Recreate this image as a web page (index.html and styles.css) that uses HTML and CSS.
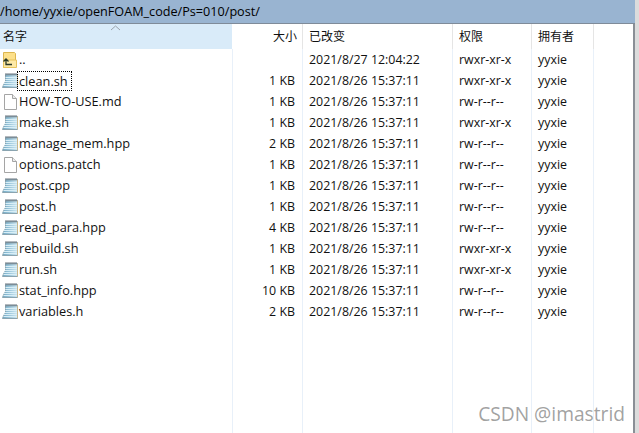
FILE: index.html
```html
<!DOCTYPE html>
<html lang="zh">
<head>
<meta charset="utf-8">
<title>post</title>
<link rel="stylesheet" href="styles.css">
</head>
<body>
<svg class="defs" width="0" height="0" aria-hidden="true">
  <defs>
    <linearGradient id="sheet" x1="0" y1="0" x2="1" y2="0">
      <stop offset="0" stop-color="#6fa9c6"/>
      <stop offset="1" stop-color="#cfe8f2"/>
    </linearGradient>
  </defs>
  <symbol id="script" viewBox="0 0 16 16">
    <path d="M3.500 1.500H15.500V14.500H.5L1.500 12 3.500 8.500Z" fill="url(#sheet)" stroke="#8aa4b0"/>
    <path d="M3.500 4.500H15M3.300 6.500H15M2.800 8.500H15M2 10.500H15M1.500 12.500H15" stroke="#d9eef6" stroke-width="1"/>
    <path d="M4 0V2.500M6 0V2.500M8 0V2.500M10 0V2.500M12 0V2.500M14 0V2.500" stroke="#6a7780" stroke-width="1"/>
    <path d="M15.500 1.500V14.500" stroke="#c7b58c"/>
  </symbol>
  <symbol id="blank" viewBox="0 0 16 16">
    <path d="M2.500 .5H10.500L14.500 4.500V15.500H2.500Z" fill="#fff" stroke="#a5a5a5"/>
    <path d="M10.500 .5V4.500H14.500" fill="#ececec" stroke="#a5a5a5"/>
  </symbol>
  <symbol id="up" viewBox="0 0 16 16">
    <path d="M1.500 .5H12.500L13.500 1.500V15.500H1.500Z" fill="#fde08a" stroke="#dcb650"/>
    <path d="M1.500 8H14.500V15.500H1.500Z" fill="#fde9a6" stroke="#e6c35d"/>
    <path d="M1.500 9.500 4 7 6.500 9.500M4 7.500V12.500H10" fill="none" stroke="#2b3a2a" stroke-width="1.300"/>
  </symbol>
</svg>
<div class="window">
  <div class="path">/home/yyxie/openFOAM_code/Ps=010/post/</div>
  <main class="list">
    <div class="row head">
      <div class="c name selected">名字<svg class="sort" width="11" height="6" viewBox="0 0 11 6"><path d="M1 5 5.500 1 10 5" fill="none" stroke="#9aa3ac"/></svg></div>
      <div class="c size">大小</div>
      <div class="c date">已改变</div>
      <div class="c perm">权限</div>
      <div class="c owner">拥有者</div>
      <div class="c rest"></div>
    </div>
    <div class="row"><div class="c name"><svg class="ico"><use href="#up"/></svg><span>..</span></div><div class="c size"></div><div class="c date">2021/8/27 12:04:22</div><div class="c perm">rwxr-xr-x</div><div class="c owner">yyxie</div><div class="c rest"></div></div>
    <div class="row"><div class="c name"><svg class="ico"><use href="#script"/></svg><span class="focus">clean.sh</span></div><div class="c size">1 KB</div><div class="c date">2021/8/26 15:37:11</div><div class="c perm">rwxr-xr-x</div><div class="c owner">yyxie</div><div class="c rest"></div></div>
    <div class="row"><div class="c name"><svg class="ico"><use href="#blank"/></svg><span>HOW-TO-USE.md</span></div><div class="c size">1 KB</div><div class="c date">2021/8/26 15:37:11</div><div class="c perm">rw-r--r--</div><div class="c owner">yyxie</div><div class="c rest"></div></div>
    <div class="row"><div class="c name"><svg class="ico"><use href="#script"/></svg><span>make.sh</span></div><div class="c size">1 KB</div><div class="c date">2021/8/26 15:37:11</div><div class="c perm">rwxr-xr-x</div><div class="c owner">yyxie</div><div class="c rest"></div></div>
    <div class="row"><div class="c name"><svg class="ico"><use href="#script"/></svg><span>manage_mem.hpp</span></div><div class="c size">2 KB</div><div class="c date">2021/8/26 15:37:11</div><div class="c perm">rw-r--r--</div><div class="c owner">yyxie</div><div class="c rest"></div></div>
    <div class="row"><div class="c name"><svg class="ico"><use href="#blank"/></svg><span>options.patch</span></div><div class="c size">1 KB</div><div class="c date">2021/8/26 15:37:11</div><div class="c perm">rw-r--r--</div><div class="c owner">yyxie</div><div class="c rest"></div></div>
    <div class="row"><div class="c name"><svg class="ico"><use href="#script"/></svg><span>post.cpp</span></div><div class="c size">1 KB</div><div class="c date">2021/8/26 15:37:11</div><div class="c perm">rw-r--r--</div><div class="c owner">yyxie</div><div class="c rest"></div></div>
    <div class="row"><div class="c name"><svg class="ico"><use href="#script"/></svg><span>post.h</span></div><div class="c size">1 KB</div><div class="c date">2021/8/26 15:37:11</div><div class="c perm">rw-r--r--</div><div class="c owner">yyxie</div><div class="c rest"></div></div>
    <div class="row"><div class="c name"><svg class="ico"><use href="#script"/></svg><span>read_para.hpp</span></div><div class="c size">4 KB</div><div class="c date">2021/8/26 15:37:11</div><div class="c perm">rw-r--r--</div><div class="c owner">yyxie</div><div class="c rest"></div></div>
    <div class="row"><div class="c name"><svg class="ico"><use href="#script"/></svg><span>rebuild.sh</span></div><div class="c size">1 KB</div><div class="c date">2021/8/26 15:37:11</div><div class="c perm">rwxr-xr-x</div><div class="c owner">yyxie</div><div class="c rest"></div></div>
    <div class="row"><div class="c name"><svg class="ico"><use href="#script"/></svg><span>run.sh</span></div><div class="c size">1 KB</div><div class="c date">2021/8/26 15:37:11</div><div class="c perm">rwxr-xr-x</div><div class="c owner">yyxie</div><div class="c rest"></div></div>
    <div class="row"><div class="c name"><svg class="ico"><use href="#script"/></svg><span>stat_info.hpp</span></div><div class="c size">10 KB</div><div class="c date">2021/8/26 15:37:11</div><div class="c perm">rw-r--r--</div><div class="c owner">yyxie</div><div class="c rest"></div></div>
    <div class="row"><div class="c name"><svg class="ico"><use href="#script"/></svg><span>variables.h</span></div><div class="c size">2 KB</div><div class="c date">2021/8/26 15:37:11</div><div class="c perm">rw-r--r--</div><div class="c owner">yyxie</div><div class="c rest"></div></div>
    <div class="row fill"><div class="c name"></div><div class="c size"></div><div class="c date"></div><div class="c perm"></div><div class="c owner"></div><div class="c rest"></div></div>
  </main>
</div>
<div class="mark">CSDN @imastrid</div>
</body>
</html>
```
FILE: styles.css
```css
html, body { margin: 0; height: 100%; }
body {
  width: 639px;
  height: 433px;
  overflow: hidden;
  background: #dcdcdc;
  font-family: "Open Sans", "Noto Sans", "Noto Sans CJK SC", sans-serif;
  font-size: 12.400px;
  color: #111;
  position: relative;
}
.defs { position: absolute; }
.window {
  width: 635px;
  height: 433px;
  display: flex;
  flex-direction: column;
  background: #fff;
}
.path {
  height: 23px;
  flex: none;
  background: #99b4d1;
  border-bottom: 1px solid #7f8b99;
  font-size: 12.650px;
  line-height: 23px;
  color: #000;
}
.list {
  flex: 1;
  display: flex;
  flex-direction: column;
  min-height: 0;
  border-right: 2px solid #8a8f96;
}
.row { display: flex; height: 21px; flex: none; line-height: 21px; }
.head { height: 25px; line-height: 25px; font-size: 12px; }
.fill { flex: 1; }
.c { box-sizing: border-box; border-right: 1px solid #e8f0f9; white-space: nowrap; flex: none; }
.head .c { border-right-color: #e5e5e5; }
.name { width: 233px; display: flex; align-items: center; gap: 1px; padding-left: 2px; position: relative; font-size: 12.750px; }
.size { width: 70px; text-align: right; padding-right: 7px; }
.head .size { padding-right: 5px; }
.date { width: 150px; padding-left: 6px; }
.perm { width: 79px; padding-left: 6px; }
.owner { width: 62px; padding-left: 6px; }
.rest { flex: 1; border-right: 0; }
.head .name { background: #d9ebf9; border-right-color: #fff; font-size: 12px; padding-left: 3px; }
.ico { width: 16px; height: 16px; flex: none; }
.focus { outline: 1px dotted #000; padding: 0 3px 0 1px; margin-left: -1px; line-height: 18px; }
.sort { position: absolute; left: 110px; top: 1px; }
.mark {
  position: absolute;
  right: 14px;
  bottom: 7px;
  font-size: 19.200px;
  color: rgba(120,120,120,.7);
  line-height: 24px;
}
```
